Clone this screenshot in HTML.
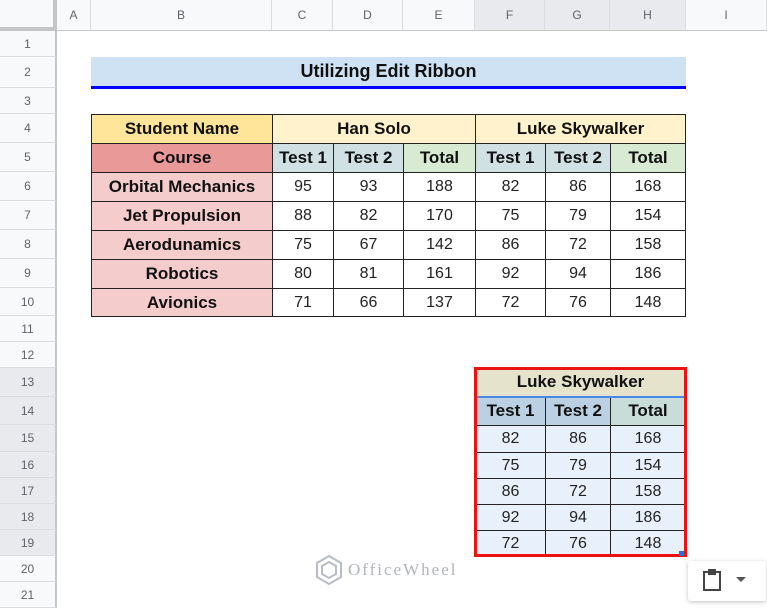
<!DOCTYPE html>
<html><head><style>
body{margin:0;width:767px;height:608px;overflow:hidden;background:#fff;font-family:"Liberation Sans",Arial,sans-serif;position:relative}
.a{position:absolute;box-sizing:border-box}
.ch{top:0;height:31px;background:#f8f9fa;border-right:1px solid #dadce0;border-bottom:1px solid #c4c7c5;color:#5f6368;font-size:12px;text-align:center;line-height:31px}
.rh{left:0;width:57px;background:#f8f9fa;border-bottom:1px solid #dadce0;border-right:2px solid #c4c7c5;color:#5f6368;font-size:12px;text-align:center}
.sel{background:#e8eaed}
table{border-collapse:collapse;position:absolute}
td{border:1px solid #222;padding:0;text-align:center;font-size:16px;color:#222}
td.b{font-weight:bold;font-size:17px;color:#111}
</style></head><body>
<!-- column headers -->
<div class="a ch" style="left:0;width:57px;border-right:4px solid #c4c7c5;border-bottom:4px solid #c4c7c5"></div>
<div class="a ch" style="left:57px;width:34px">A</div>
<div class="a ch" style="left:91px;width:181px">B</div>
<div class="a ch" style="left:272px;width:61px">C</div>
<div class="a ch" style="left:333px;width:70px">D</div>
<div class="a ch" style="left:403px;width:72px">E</div>
<div class="a ch sel" style="left:475px;width:70px">F</div>
<div class="a ch sel" style="left:545px;width:65px">G</div>
<div class="a ch sel" style="left:610px;width:76px">H</div>
<div class="a ch" style="left:686px;width:81px">I</div>
<!-- row headers -->
<div class="a rh" style="top:31px;height:26px;line-height:26px">1</div>
<div class="a rh" style="top:57px;height:31px;line-height:31px">2</div>
<div class="a rh" style="top:88px;height:26px;line-height:26px">3</div>
<div class="a rh" style="top:114px;height:29px;line-height:29px">4</div>
<div class="a rh" style="top:143px;height:29px;line-height:29px">5</div>
<div class="a rh" style="top:172px;height:29px;line-height:29px">6</div>
<div class="a rh" style="top:201px;height:29px;line-height:29px">7</div>
<div class="a rh" style="top:230px;height:29px;line-height:29px">8</div>
<div class="a rh" style="top:259px;height:29px;line-height:29px">9</div>
<div class="a rh" style="top:288px;height:28px;line-height:28px">10</div>
<div class="a rh" style="top:316px;height:26px;line-height:26px">11</div>
<div class="a rh" style="top:342px;height:26px;line-height:26px">12</div>
<div class="a rh sel" style="top:368px;height:29px;line-height:29px">13</div>
<div class="a rh sel" style="top:397px;height:28px;line-height:28px">14</div>
<div class="a rh sel" style="top:425px;height:27px;line-height:27px">15</div>
<div class="a rh sel" style="top:452px;height:26px;line-height:26px">16</div>
<div class="a rh sel" style="top:478px;height:26px;line-height:26px">17</div>
<div class="a rh sel" style="top:504px;height:26px;line-height:26px">18</div>
<div class="a rh sel" style="top:530px;height:26px;line-height:26px">19</div>
<div class="a rh" style="top:556px;height:26px;line-height:26px">20</div>
<div class="a rh" style="top:582px;height:26px;line-height:26px">21</div>
<!-- title -->
<div class="a" style="left:91px;top:57px;width:595px;height:29px;background:#cfe2f3;text-align:center;font-weight:bold;font-size:18px;line-height:29px;color:#111">Utilizing Edit Ribbon</div>
<div class="a" style="left:91px;top:86px;width:595px;height:3px;background:#0000ff"></div>
<!-- main table -->
<table style="left:91px;top:114px;width:595px">
<tr style="height:29px"><td class="b" style="width:180px;background:#ffe599">Student Name</td><td class="b" colspan="3" style="background:#fff2cc">Han Solo</td><td class="b" colspan="3" style="background:#fff2cc">Luke Skywalker</td></tr>
<tr style="height:29px"><td class="b" style="background:#ea9999">Course</td><td class="b" style="width:60px;background:#d0e0e3">Test 1</td><td class="b" style="width:69px;background:#d0e0e3">Test 2</td><td class="b" style="width:71px;background:#d9ead3">Total</td><td class="b" style="width:69px;background:#d0e0e3">Test 1</td><td class="b" style="width:64px;background:#d0e0e3">Test 2</td><td class="b" style="background:#d9ead3">Total</td></tr>
<tr style="height:29px"><td class="b" style="background:#f4cccc">Orbital Mechanics</td><td>95</td><td>93</td><td>188</td><td>82</td><td>86</td><td>168</td></tr>
<tr style="height:29px"><td class="b" style="background:#f4cccc">Jet Propulsion</td><td>88</td><td>82</td><td>170</td><td>75</td><td>79</td><td>154</td></tr>
<tr style="height:29px"><td class="b" style="background:#f4cccc">Aerodunamics</td><td>75</td><td>67</td><td>142</td><td>86</td><td>72</td><td>158</td></tr>
<tr style="height:29px"><td class="b" style="background:#f4cccc">Robotics</td><td>80</td><td>81</td><td>161</td><td>92</td><td>94</td><td>186</td></tr>
<tr style="height:28px"><td class="b" style="background:#f4cccc">Avionics</td><td>71</td><td>66</td><td>137</td><td>72</td><td>76</td><td>148</td></tr>
</table>
<!-- pasted table -->
<table style="left:475px;top:368px;width:211px">
<tr style="height:28px"><td class="b" colspan="3" style="background:#e6e3cc;border-bottom:2px solid #4a86e8">Luke Skywalker</td></tr>
<tr style="height:29px"><td class="b" style="width:69px;background:#bcd0e3">Test 1</td><td class="b" style="width:64px;background:#bcd0e3">Test 2</td><td class="b" style="background:#c8ddd8">Total</td></tr>
<tr style="height:27px;background:#e8f0fc"><td>82</td><td>86</td><td>168</td></tr>
<tr style="height:26px;background:#e8f0fc"><td>75</td><td>79</td><td>154</td></tr>
<tr style="height:26px;background:#e8f0fc"><td>86</td><td>72</td><td>158</td></tr>
<tr style="height:26px;background:#e8f0fc"><td>92</td><td>94</td><td>186</td></tr>
<tr style="height:26px;background:#e8f0fc"><td>72</td><td>76</td><td>148</td></tr>
</table>
<div class="a" style="left:474px;top:367px;width:213px;height:190px;border:3px solid #ee1111"></div>
<div class="a" style="left:679px;top:551px;width:5px;height:5px;background:#1a73e8"></div>
<!-- watermark -->
<svg class="a" style="left:312px;top:553px" width="34" height="34" viewBox="0 0 34 34" fill="none" stroke="#b8bcc4" stroke-width="2"><path d="M17 3l12 7v14l-12 7-12-7V10z"/><path d="M17 9l7 4v8l-7 4-7-4v-8z"/></svg>
<div class="a" style="left:348px;top:560px;font-family:'Liberation Serif',serif;font-size:17px;letter-spacing:2px;color:#b0b4bc">OfficeWheel</div>
<!-- paste button -->
<div class="a" style="left:688px;top:561px;width:78px;height:40px;background:#fff;box-shadow:0 1px 4px rgba(0,0,0,.25);border-radius:3px"></div>
<svg class="a" style="left:702px;top:568px" width="20" height="24" viewBox="0 0 20 24" fill="none" stroke="#444" stroke-width="2"><rect x="2" y="4" width="16" height="18"/><rect x="7" y="2" width="6" height="4" fill="#444"/></svg>
<div class="a" style="left:736px;top:577px;width:0;height:0;border-left:5px solid transparent;border-right:5px solid transparent;border-top:5px solid #555"></div>
</body></html>
